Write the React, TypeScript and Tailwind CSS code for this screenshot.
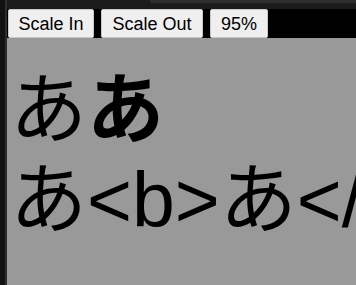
import React from "react";

const btn =
  "h-[29px] px-[8px] border border-[#c8c8c8] bg-[#efefef] text-[18px] leading-none text-black whitespace-nowrap rounded-[2px] font-['Liberation_Sans',Arial,sans-serif]";

export default function App() {
  return (
    <div className="flex w-[356px] h-[285px] overflow-hidden bg-[#121212]">
      <div className="w-[7px] shrink-0 flex">
        <div className="w-[5px] bg-[#121212]" />
        <div className="w-[2px] bg-[#2e2e2e]" />
      </div>
      <div className="flex-1 flex flex-col min-w-0">
        <div className="h-[9px] shrink-0 bg-[#1c1c1c] flex">
          <div className="w-[143px]" />
          <div className="flex-1 flex flex-col">
            <div className="h-[3px] bg-[#2e2e2e]" />
          </div>
        </div>
        <div className="h-[29px] shrink-0 bg-black flex items-start gap-[7px] pl-[1px]">
          <button className={`${btn} bg-[#e9e9e9] w-[86px]`}>Scale In</button>
          <button className={`${btn} w-[102px]`}>Scale Out</button>
          <button className={`${btn} w-[58px]`}>95%</button>
        </div>
        <div className="flex-1 bg-[#999999] overflow-hidden pl-[3px] pt-[27px] text-[77px] leading-[90px] text-black whitespace-nowrap font-['Liberation_Sans','Noto_Sans_CJK_JP',sans-serif]">
          <div>
            あ<b>あ</b>
          </div>
          <div>{"あ<b>あ</b>"}</div>
        </div>
      </div>
    </div>
  );
}
